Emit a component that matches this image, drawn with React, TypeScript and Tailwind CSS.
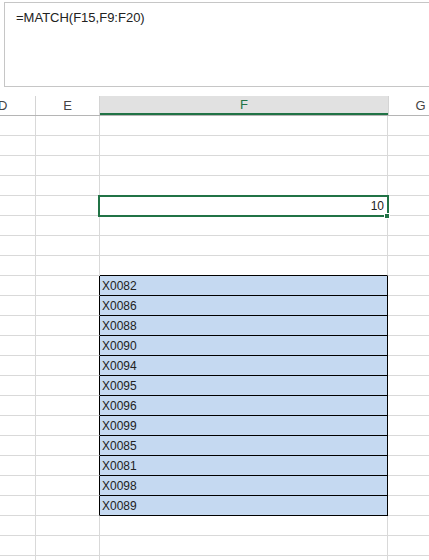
import React from "react";

const values = [
  "X0082", "X0086", "X0088", "X0090", "X0094", "X0095",
  "X0096", "X0099", "X0085", "X0081", "X0098", "X0089",
];

const DATA_START = 8;
const SELECTED = 4;

export default function App() {
  const rows = Array.from({ length: 23 }, (_, i) => i);

  return (
    <div className="relative w-[429px] h-[560px] overflow-hidden bg-white text-[#222] font-['Liberation_Sans',Arial,sans-serif]">
      {/* formula bar */}
      <div className="h-[96px] pt-[2px] pl-[4px]">
        <div className="w-[460px] h-[85px] border border-[#c6c6c6] px-[11px] pt-[5px] text-[13px] text-[#222]">
          =MATCH(F15,F9:F20)
        </div>
      </div>

      {/* column headers */}
      <div className="flex h-[20px] border-b border-[#b5b5b5] text-[13px] text-[#444]">
        <div className="w-[36px] shrink-0 border-r border-[#d4d4d4] overflow-hidden flex items-center">
          <span className="-ml-[2px]">D</span>
        </div>
        <div className="w-[64px] shrink-0 border-r border-[#d4d4d4] flex items-center justify-center">E</div>
        <div className="w-[288px] shrink-0 bg-[#e1e1e1] border-b-2 border-[#217346] flex items-center justify-center text-[#217346]">
          F
        </div>
        <div className="w-[64px] shrink-0 border-l border-[#d4d4d4] flex items-center justify-center">G</div>
      </div>

      {/* grid rows */}
      {rows.map((r) => {
        const idx = r - DATA_START;
        const isData = idx >= 0 && idx < values.length;
        const aboveData = r === DATA_START - 1;
        return (
          <div key={r} className="flex h-[20px]">
            <div className="w-[36px] shrink-0 border-r border-b border-[#d9d9d9]" />
            <div
              className={
                "w-[64px] shrink-0 border-b border-[#d9d9d9] border-r " +
                (isData ? "border-r-black" : "border-r-[#d9d9d9]")
              }
            />
            <div
              className={
                "w-[288px] shrink-0 border-b text-[12px] flex items-center " +
                (isData
                  ? "bg-[#c5d9f1] border-black border-r pl-[2px]"
                  : aboveData
                  ? "border-b-black border-r border-r-[#d9d9d9]"
                  : "border-[#d9d9d9] border-r")
              }
            >
              {isData ? values[idx] : null}
              {r === SELECTED ? (
                <span className="ml-auto pr-[3px] text-[12px]">10</span>
              ) : null}
            </div>
            <div className="flex-1 border-b border-[#d9d9d9]" />
          </div>
        );
      })}

      {/* active cell outline */}
      <div className="absolute left-[98px] top-[195px] w-[291px] h-[22px] border-2 border-[#217346] pointer-events-none" />
      <div className="absolute left-[384px] top-[213px] w-[6px] h-[6px] bg-[#217346] border border-white" />
    </div>
  );
}
